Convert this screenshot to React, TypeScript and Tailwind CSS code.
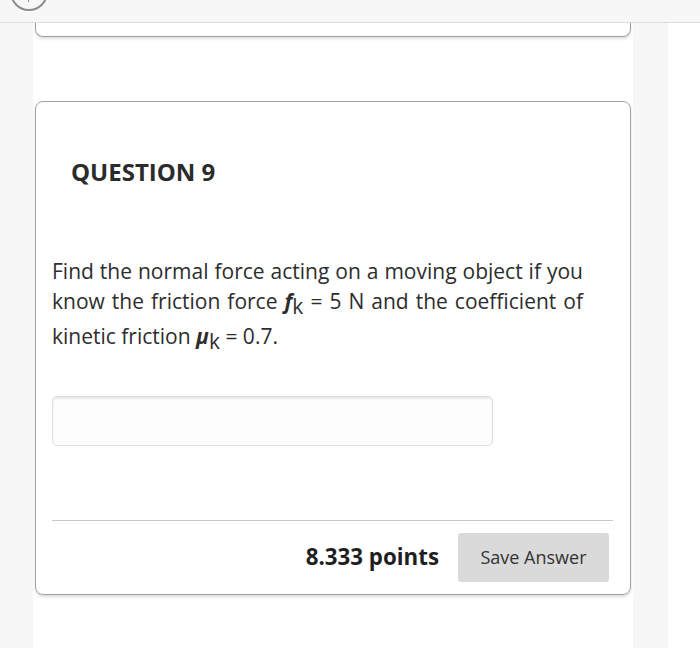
const App = () => {
  return (
    <main className="h-[648px] w-[700px] overflow-hidden flex flex-col font-['Open_Sans',sans-serif] text-[#2d2d2d] bg-white">
      {/* top bar */}
      <header className="relative h-[23px] shrink-0 bg-[#f7f7f7] border-b border-[#dcdcdc] z-10">
        <div className="absolute left-[10px] top-[-27px] w-[38px] h-[38px] rounded-full border-2 border-[#8c8c8c] bg-[#f7f7f7]">
          <span className="absolute left-[16px] bottom-[7px] w-px h-[4px] bg-[#8c8c8c]" />
        </div>
      </header>

      <section className="flex flex-1">
        <div className="w-[33px] bg-[#f7f7f7]" />

        <div className="w-[600px] bg-white px-[2px]">
          {/* previous question card, bottom edge only */}
          <div className="h-[14px] border-x-[1.5px] border-b-[1.5px] border-[#9e9e9e] rounded-b-[8px] shadow-[0_2px_3px_rgba(0,0,0,0.12)]" />

          {/* question card */}
          <article className="mt-[64px] border-[1.5px] border-[#a3a3a3] rounded-[8px] shadow-[0_2px_3px_rgba(0,0,0,0.14)] pl-[16px] pr-[17px] pt-[54px] pb-[12px]">
            <h1 className="ml-[19px] text-[24px] leading-[32px] font-bold text-[#2b2b2b]">
              QUESTION 9
            </h1>

            <p className="mt-[68px] w-[531px] text-justify text-[21px] leading-[30px]">
              Find the normal force acting on a moving object if you know the friction force{" "}
              <span className="font-bold italic">f</span>
              <span className="align-[-5px]">k</span> = 5 N and the coefficient of kinetic friction{" "}
              <span className="font-bold italic">μ</span>
              <span className="align-[-5px]">k</span> = 0.7.
            </p>

            <input
              type="text"
              aria-label="answer"
              className="mt-[40px] block w-[441px] h-[50px] rounded-[5px] border border-[#dedede] bg-[#fdfdfd] shadow-[inset_0_2px_2px_rgba(0,0,0,0.08)] outline-none"
            />

            <div className="mt-[74px] h-px bg-[#c8c8c8]" />

            <div className="mt-[12px] flex items-center justify-end gap-[19px] pr-[4px]">
              <span className="text-[22.3px] font-bold text-[#1f1f1f] -translate-y-[1px]">8.333 points</span>
              <button className="w-[151px] h-[49px] rounded-[3px] bg-[#dadada] text-[18px] text-[#333]">
                Save Answer
              </button>
            </div>
          </article>
        </div>

        <div className="w-[35px] bg-[#f7f7f7]" />
        <div className="flex-1 bg-white" />
      </section>
    </main>
  );
};

export default App;
